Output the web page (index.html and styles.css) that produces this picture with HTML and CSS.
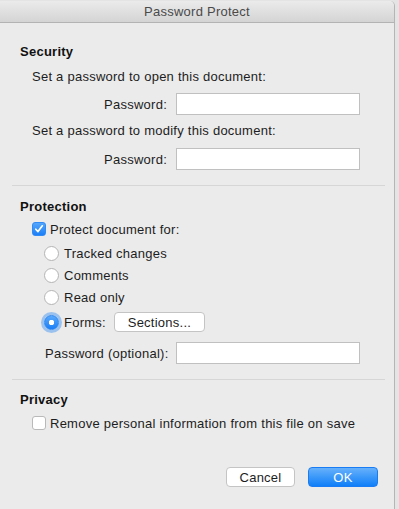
FILE: index.html
```html
<!DOCTYPE html>
<html lang="en">
  <head>
    <meta charset="UTF-8" />
    <meta name="viewport" content="width=device-width, initial-scale=1.0" />
    <title>Password Protect</title>
    <link rel="stylesheet" href="styles.css">
  </head>
  <body>
    <div class="window">
      <div class="titlebar">Password Protect</div>

      <div class="content">
        <!-- Security -->
        <div class="section security">
          <div class="heading">Security</div>
          <div class="line">Set a password to open this document:</div>
          <div class="field-row">
            <label class="field-label">Password:</label>
            <input class="text-input" type="password">
          </div>
          <div class="line">Set a password to modify this document:</div>
          <div class="field-row">
            <label class="field-label">Password:</label>
            <input class="text-input" type="password">
          </div>
        </div>

        <div class="separator"></div>

        <!-- Protection -->
        <div class="section protection">
          <div class="heading">Protection</div>
          <div class="check-row">
            <span class="checkbox checked">
              <svg width="10" height="10" viewBox="0 0 10 10"><path d="M1.8 5.2 L4 7.6 L8.3 1.8" fill="none" stroke="#fff" stroke-width="1.7" stroke-linecap="round" stroke-linejoin="round"/></svg>
            </span>
            <span>Protect document for:</span>
          </div>
          <div class="radio-list">
            <div class="radio-row"><span class="radio"></span><span>Tracked changes</span></div>
            <div class="radio-row"><span class="radio"></span><span>Comments</span></div>
            <div class="radio-row"><span class="radio"></span><span>Read only</span></div>
            <div class="radio-row forms-row">
              <span class="radio selected"></span><span>Forms:</span>
              <button class="btn sections-btn">Sections...</button>
            </div>
          </div>
          <div class="field-row optional-row">
            <label class="field-label">Password (optional):</label>
            <input class="text-input" type="password">
          </div>
        </div>

        <div class="separator"></div>

        <!-- Privacy -->
        <div class="section privacy">
          <div class="heading">Privacy</div>
          <div class="check-row">
            <span class="checkbox"></span>
            <span>Remove personal information from this file on save</span>
          </div>
        </div>
      </div>

      <div class="actions">
        <button class="btn cancel-btn">Cancel</button>
        <button class="btn ok-btn">OK</button>
      </div>
    </div>
  </body>
</html>
```

FILE: styles.css
```css
* {
  margin: 0;
  padding: 0;
  box-sizing: border-box;
}

body {
  font-family: "Liberation Sans", Arial, Helvetica, sans-serif;
  font-size: 13px;
  letter-spacing: 0.25px;
  color: #1d1d1d;
  background-color: #e4e4e4;
  width: 399px;
  height: 509px;
  overflow: hidden;
}

/* Dialog window */
.window {
  width: 395px;
  height: 509px;
  margin-top: 1px;
  background-color: #ebebeb;
  border-right: 1px solid #b5b5b5;
  border-top-right-radius: 5px;
  display: flex;
  flex-direction: column;
}

.titlebar {
  height: 22px;
  line-height: 21px;
  text-align: center;
  color: #4a4a4a;
  background: linear-gradient(#ebebeb, #d4d4d4);
  border-bottom: 1px solid #b3b3b3;
  border-top-right-radius: 5px;
  flex-shrink: 0;
}

.content {
  padding: 0 8px 0 12px;
}

.section {
  padding-left: 8px;
}

.security {
  padding-top: 20px;
}

.heading {
  height: 18px;
  line-height: 18px;
  font-weight: bold;
  color: #111;
}

.line {
  height: 18px;
  line-height: 18px;
  margin-top: 7px;
  padding-left: 12px;
}

/* Label + text field rows */
.field-row {
  display: flex;
  align-items: center;
  height: 22px;
  margin-top: 7px;
}

.security .field-row:last-child {
  margin-top: 8px;
}

.field-label {
  width: 147px;
  flex-shrink: 0;
  white-space: nowrap;
  text-align: right;
  margin-right: 9px;
}

.text-input {
  width: 184px;
  height: 22px;
  border: 1px solid #c0c0c0;
  background-color: #fff;
  outline: none;
}

.separator {
  height: 1px;
  background-color: #d6d6d6;
  margin-top: 15px;
  margin-right: 1px;
}

/* Protection */
.protection {
  padding-top: 12px;
}

.check-row {
  display: flex;
  align-items: center;
  height: 18px;
  margin-top: 4px;
  padding-left: 12px;
  gap: 4px;
}

.checkbox {
  width: 14px;
  height: 14px;
  border: 1px solid #b9b9b9;
  border-radius: 3px;
  background-color: #fff;
  display: flex;
  align-items: center;
  justify-content: center;
}

.checkbox.checked {
  border-color: #2f8bf5;
  background: linear-gradient(#55a6fb, #1c7ff7);
}

.radio-list {
  margin-top: 4px;
  padding-left: 24px;
}

.radio-row {
  display: flex;
  align-items: center;
  height: 22px;
  gap: 5px;
}

.radio {
  width: 15px;
  height: 15px;
  border: 1px solid #b4b4b4;
  border-radius: 50%;
  background-color: #fff;
  flex-shrink: 0;
}

.radio.selected {
  border-color: #2a86f2;
  background: radial-gradient(circle, #fff 2.5px, transparent 3px), linear-gradient(#5aa9fb, #1b7ef6);
  box-shadow: 0 0 0 3px rgba(90, 160, 240, 0.55);
}

.forms-row {
  margin-top: 3px;
}

.btn {
  font-family: inherit;
  font-size: 13px;
  letter-spacing: 0.25px;
  color: #1d1d1d;
  background-color: #fff;
  border: 1px solid #c4c4c4;
  border-radius: 4px;
  height: 20px;
  cursor: pointer;
}

.sections-btn {
  width: 91px;
  margin-left: 3px;
}

.optional-row {
  margin-top: 9px;
}

.optional-row .field-label {
  text-align: left;
  padding-left: 25px;
}

/* Privacy */
.privacy {
  padding-top: 11px;
}

.privacy .check-row {
  margin-top: 5px;
}

/* Footer buttons */
.actions {
  display: flex;
  justify-content: flex-end;
  gap: 13px;
  padding-right: 16px;
  margin-top: 35px;
}

.cancel-btn {
  width: 69px;
}

.ok-btn {
  width: 70px;
  color: #fff;
  border-color: #1a7cf5;
  background: linear-gradient(#67b1fb, #0f7ff8);
}
```
